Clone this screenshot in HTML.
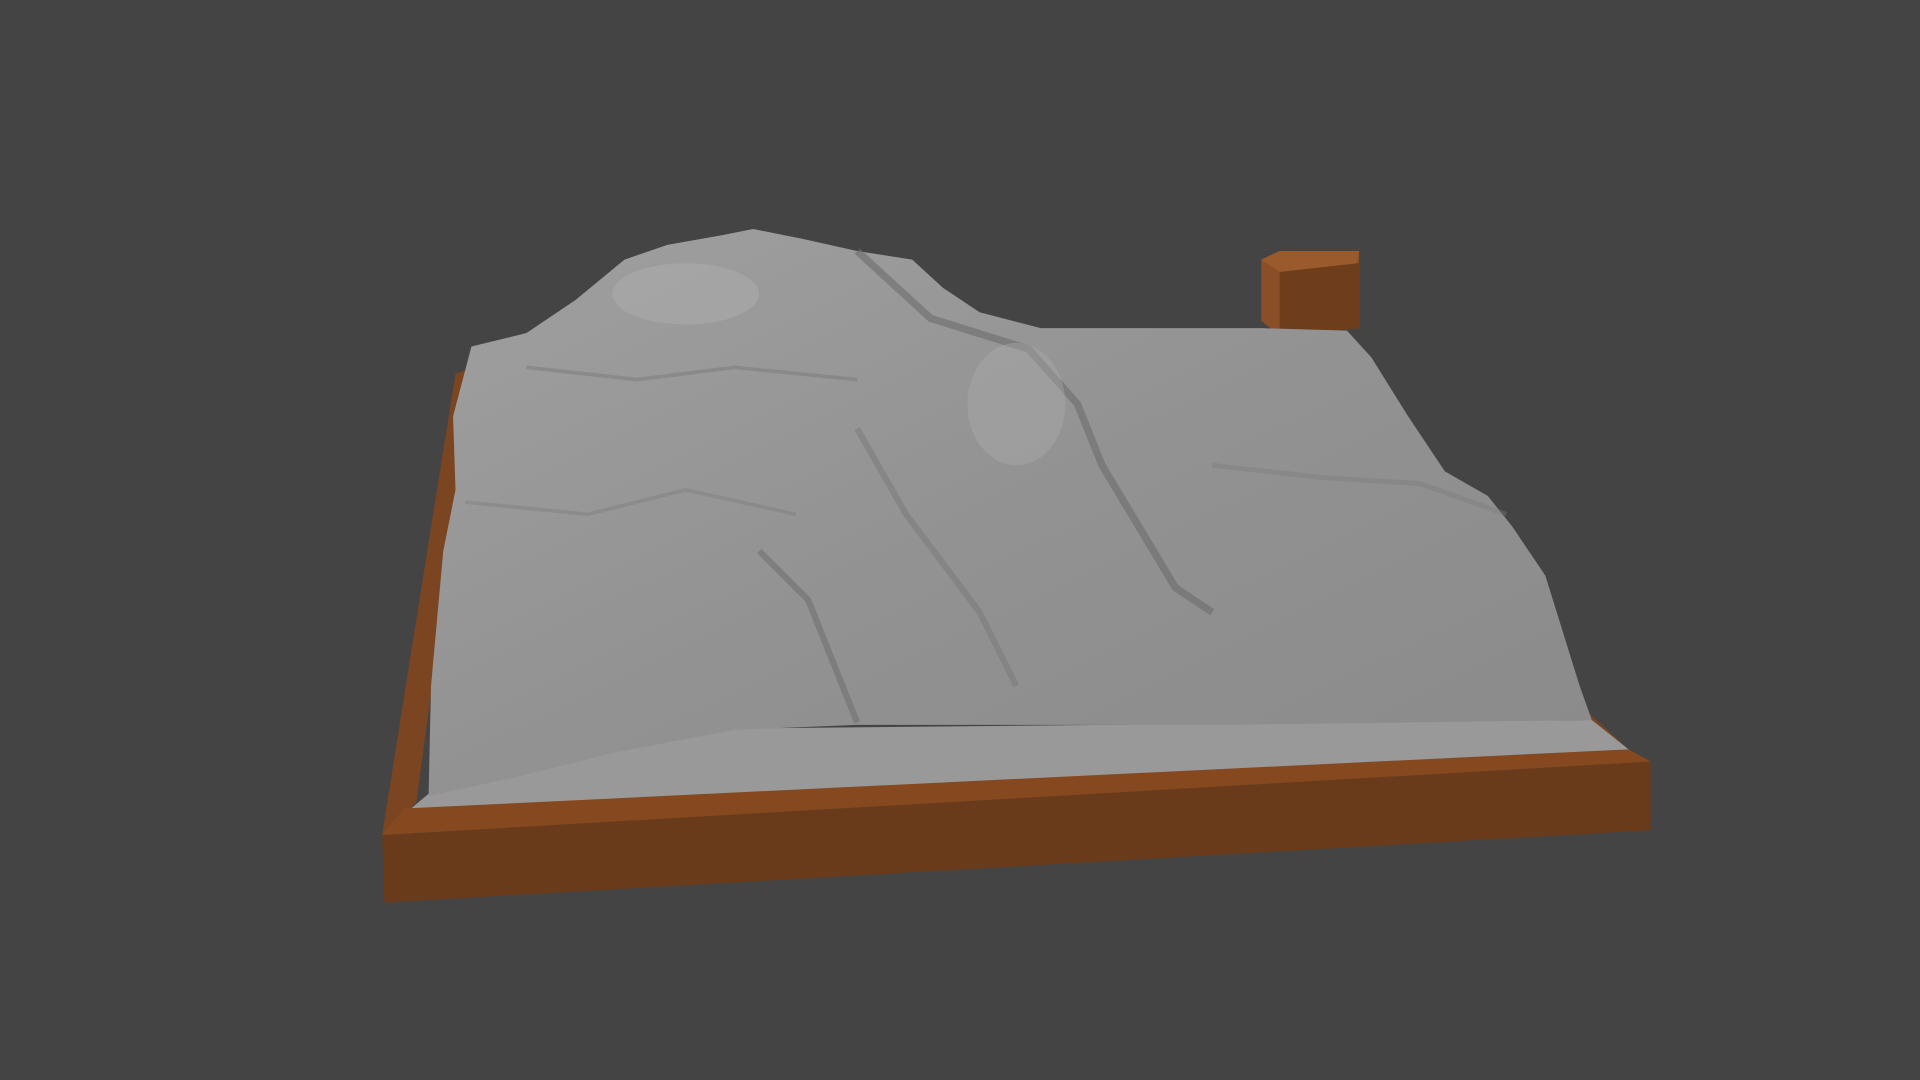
<!DOCTYPE html>
<html><head><meta charset="utf-8"><style>
html,body{margin:0;padding:0;background:#444444;overflow:hidden}
svg{display:block}
</style></head><body>
<svg width="1920" height="1080" viewBox="0 0 1568 882" xmlns="http://www.w3.org/2000/svg">
<defs>
<linearGradient id="t" x1="0" y1="0" x2="1" y2="1">
<stop offset="0" stop-color="#a0a0a0"/><stop offset="0.5" stop-color="#929292"/><stop offset="1" stop-color="#8a8a8a"/>
</linearGradient>
</defs>
<rect width="1568" height="882" fill="#444444"/>
<!-- back box -->
<polygon points="1030,212 1045,205 1110,205 1110,268 1045,274 1030,262" fill="#8a4f26"/>
<polygon points="1045,222 1110,215 1110,268 1045,274" fill="#6e3d1c"/>
<polygon points="1030,212 1045,205 1110,205 1108,215 1045,222" fill="#9a5a2c"/>
<!-- base left side rim -->
<polygon points="372,305 388,300 340,655 312,682" fill="#7a4520"/>
<!-- base right rim -->
<polygon points="1295,580 1330,612 1348,622 1330,628" fill="#7a4520"/>
<!-- base top surface -->
<polygon points="330,660 1330,612 1348,622 312,682" fill="#86491f"/>
<!-- base front face -->
<polygon points="312,682 1348,622 1348,678 314,737" fill="#6a3b1b"/>
<!-- flat grey plate -->
<polygon points="336,660 360,640 600,595 1300,588 1330,612" fill="#999999"/>
<!-- terrain -->
<polygon fill="url(#t)" points="370,340 385,283 430,272 470,245 510,212 545,200 590,192 615,187 655,195 700,205 745,212 770,235 800,255 850,268 940,268 1030,268 1100,270 1120,292 1150,340 1180,385 1215,405 1235,430 1262,470 1290,560 1300,588 1000,592 700,592 600,596 500,615 420,635 350,650 352,560 362,450 372,400"/>
<!-- shading ridges -->
<path d="M700,205 L760,260 L840,285 L880,330 L900,380 L930,430 L960,480 L990,500" stroke="#6d6d6d" stroke-width="6" fill="none" opacity="0.6"/>
<path d="M700,350 L740,420 L770,460 L800,500 L830,560" stroke="#777" stroke-width="5" fill="none" opacity="0.5"/>
<path d="M620,450 L660,490 L680,540 L700,590" stroke="#6a6a6a" stroke-width="5" fill="none" opacity="0.5"/>
<path d="M430,300 L520,310 L600,300 L700,310" stroke="#7a7a7a" stroke-width="3" fill="none" opacity="0.5"/>
<path d="M380,410 L480,420 L560,400 L650,420" stroke="#7a7a7a" stroke-width="3" fill="none" opacity="0.4"/>
<path d="M990,380 L1080,390 L1160,395 L1230,420" stroke="#7a7a7a" stroke-width="4" fill="none" opacity="0.4"/>
<ellipse cx="560" cy="240" rx="60" ry="25" fill="#adadad" opacity="0.5"/>
<ellipse cx="830" cy="330" rx="40" ry="50" fill="#acacac" opacity="0.4"/>
</svg>
</body></html>
